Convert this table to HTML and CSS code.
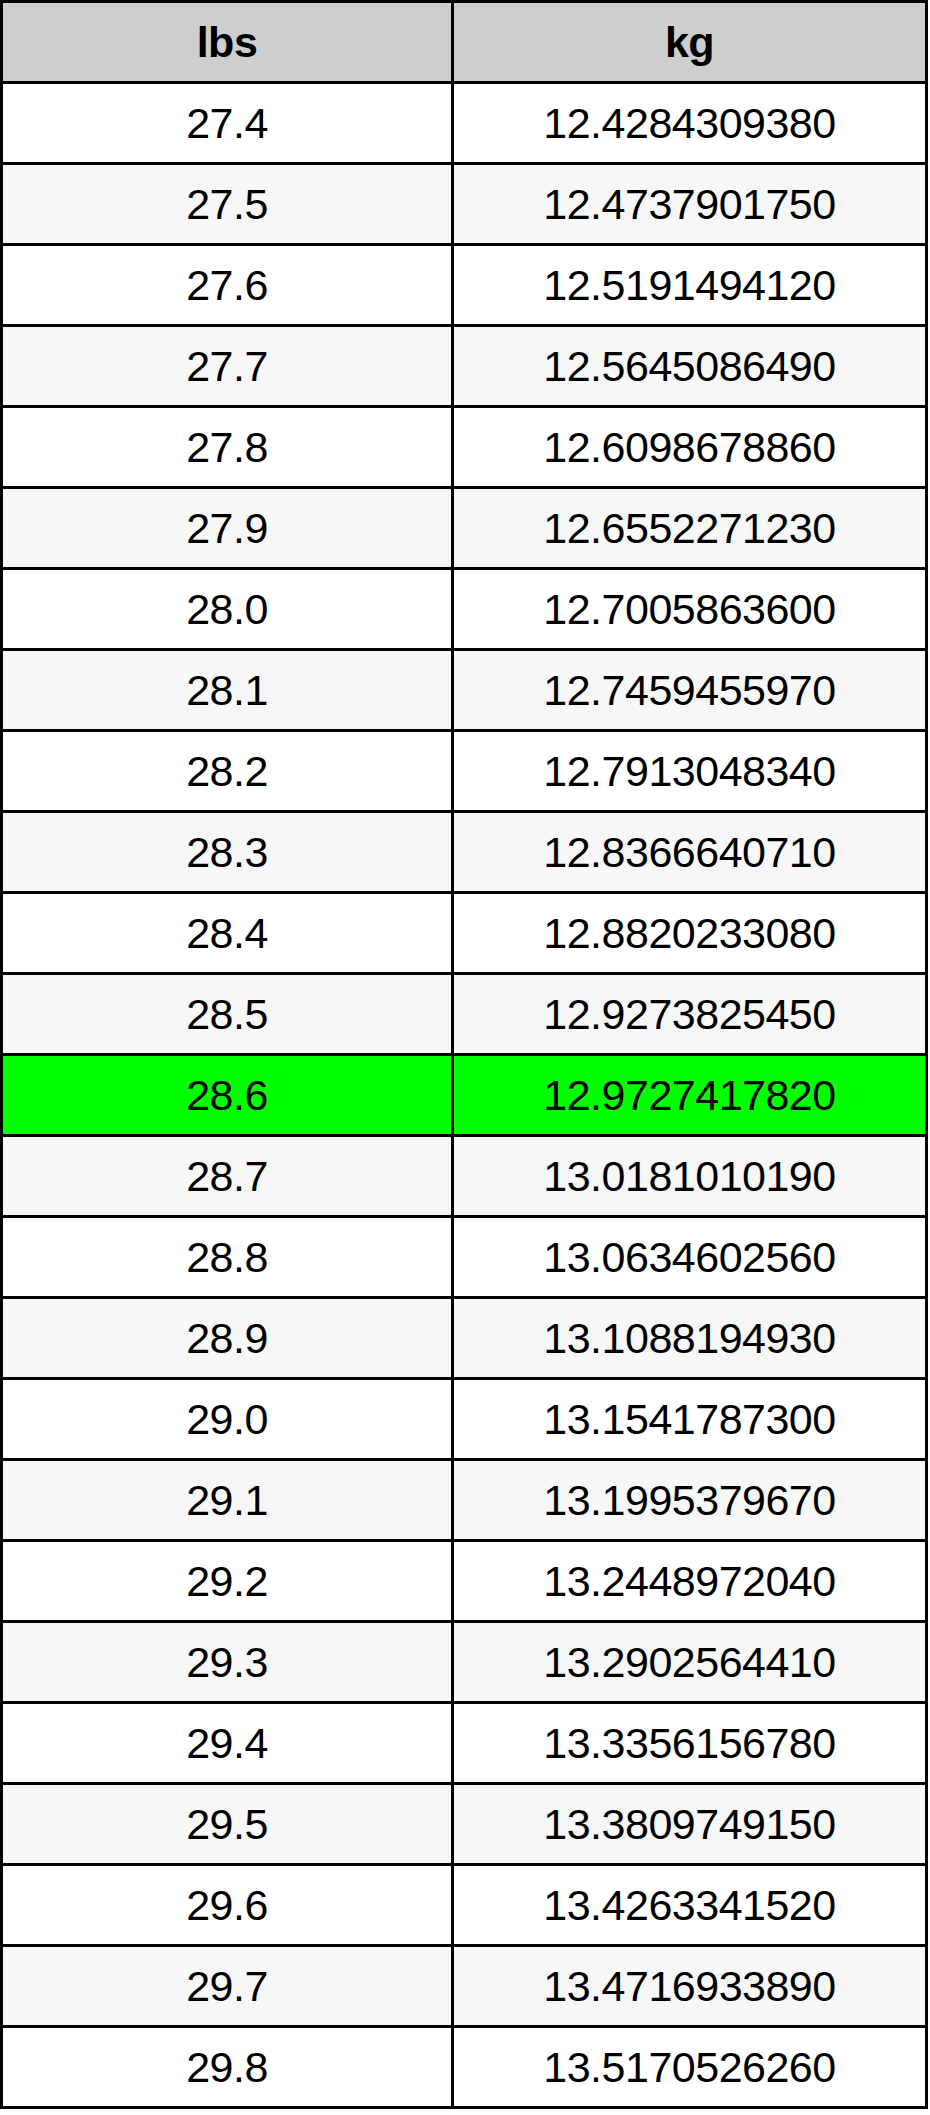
FILE: index.html
```html
<!DOCTYPE html>
<html>
<head>
<meta charset="utf-8">
<link rel="stylesheet" href="styles.css">
</head>
<body>
<div class="table">
  <div class="cell head">lbs</div><div class="cell head">kg</div>
  <div class="cell">27.4</div><div class="cell">12.4284309380</div>
  <div class="cell alt">27.5</div><div class="cell alt">12.4737901750</div>
  <div class="cell">27.6</div><div class="cell">12.5191494120</div>
  <div class="cell alt">27.7</div><div class="cell alt">12.5645086490</div>
  <div class="cell">27.8</div><div class="cell">12.6098678860</div>
  <div class="cell alt">27.9</div><div class="cell alt">12.6552271230</div>
  <div class="cell">28.0</div><div class="cell">12.7005863600</div>
  <div class="cell alt">28.1</div><div class="cell alt">12.7459455970</div>
  <div class="cell">28.2</div><div class="cell">12.7913048340</div>
  <div class="cell alt">28.3</div><div class="cell alt">12.8366640710</div>
  <div class="cell">28.4</div><div class="cell">12.8820233080</div>
  <div class="cell alt">28.5</div><div class="cell alt">12.9273825450</div>
  <div class="cell hl">28.6</div><div class="cell hl">12.9727417820</div>
  <div class="cell alt">28.7</div><div class="cell alt">13.0181010190</div>
  <div class="cell">28.8</div><div class="cell">13.0634602560</div>
  <div class="cell alt">28.9</div><div class="cell alt">13.1088194930</div>
  <div class="cell">29.0</div><div class="cell">13.1541787300</div>
  <div class="cell alt">29.1</div><div class="cell alt">13.1995379670</div>
  <div class="cell">29.2</div><div class="cell">13.2448972040</div>
  <div class="cell alt">29.3</div><div class="cell alt">13.2902564410</div>
  <div class="cell">29.4</div><div class="cell">13.3356156780</div>
  <div class="cell alt">29.5</div><div class="cell alt">13.3809749150</div>
  <div class="cell">29.6</div><div class="cell">13.4263341520</div>
  <div class="cell alt">29.7</div><div class="cell alt">13.4716933890</div>
  <div class="cell">29.8</div><div class="cell">13.5170526260</div>
</div>
</body>
</html>
```
FILE: styles.css
```css
html, body {
  margin: 0;
  padding: 0;
  background: #ffffff;
}
.table {
  display: grid;
  grid-template-columns: 448px 471px;
  grid-auto-rows: 78px;
  gap: 3px;
  padding: 3px;
  width: max-content;
  background: #000000;
  font-family: "Liberation Sans", Arial, Helvetica, sans-serif;
  font-size: 43px;
  letter-spacing: -0.5px;
  color: #000000;
}
.cell {
  display: flex;
  align-items: center;
  justify-content: center;
  background: #ffffff;
}
.head {
  background: #cecece;
  font-weight: bold;
}
.alt {
  background: #f7f7f7;
}
.hl {
  background: #00ff00;
}
```
